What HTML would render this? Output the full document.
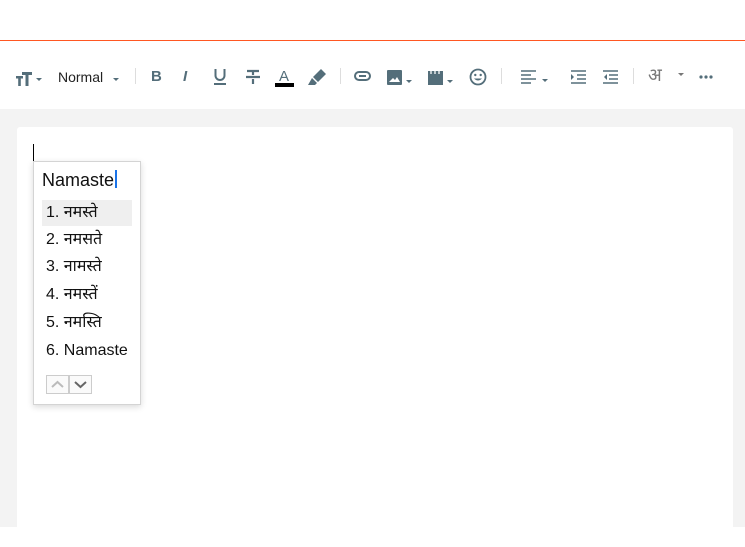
<!DOCTYPE html>
<html><head><meta charset="utf-8"><style>
*{margin:0;padding:0;box-sizing:border-box}
body{width:745px;height:527px;overflow:hidden;background:#fff;font-family:"Liberation Sans",Roboto,sans-serif;position:relative}
.line{position:absolute;left:0;top:40px;width:745px;height:1px;background:#ff5722}
.tb{position:absolute;left:0;top:41px;width:745px;height:68px;background:#fff}
.grey{position:absolute;left:0;top:109px;width:745px;height:418px;background:#f3f3f3}
.card{position:absolute;left:17px;top:127px;width:716px;height:420px;background:#fff;border-radius:3px}
.i{position:absolute;top:68px;height:18px;color:#546e7a;font-weight:bold;font-size:15px;line-height:18px}
.sep{position:absolute;top:68px;width:1px;height:16px;background:#ddd}
.caret{position:absolute;width:0;height:0;border-left:3px solid transparent;border-right:3px solid transparent;border-top:3px solid #546e7a}
.pop{position:absolute;left:33px;top:161px;width:108px;height:244px;background:#fff;border:1px solid #d4d4d4;box-shadow:0 2px 6px rgba(0,0,0,.15)}
.pop .w{position:absolute;left:8px;top:8px;font-size:18px;color:#111}
.pop .c{position:absolute;left:81px;top:8px;width:2px;height:18px;background:#1a73e8}
.it{position:absolute;left:8px;width:90px;height:26px;font-size:16px;line-height:26px;padding-left:4px;color:#111;font-family:"Liberation Sans","Noto Sans Devanagari","FreeSerif",sans-serif}
.sel{background:#efefef}
.nb{position:absolute;top:213px;width:23px;height:19px;border:1px solid #ccc;background:#fafafa}
</style></head><body>
<div class="line"></div>
<div class="tb"></div>
<div class="grey"></div>
<div class="card"></div>

<svg class="i" style="left:16px;top:70px" width="16" height="14" viewBox="0 0 16 14"><path d="M0 4h7v2.5H4.8V14H2.2V6.5H0zM6 0h10v3h-3.5v11h-3V3H6z" fill="#546e7a"/></svg>
<div class="caret" style="left:36px;top:78px"></div>
<div style="position:absolute;left:58px;top:69px;font-size:14px;color:#222">Normal</div>
<div class="caret" style="left:113px;top:78px"></div>
<div class="sep" style="left:135px"></div>
<div class="i" style="left:151px">B</div>
<div class="i" style="left:183px;font-style:italic;font-size:15px">I</div>
<svg style="position:absolute;left:213px;top:69px" width="14" height="16" viewBox="0 0 14 16"><path d="M2.5 0v6.5a4.5 4.5 0 009 0V0" fill="none" stroke="#546e7a" stroke-width="2"/><path d="M1 15h12" stroke="#546e7a" stroke-width="2"/></svg>
<svg style="position:absolute;left:246px;top:69px" width="14" height="16" viewBox="0 0 14 16"><path d="M1 2h12M0 8h14M7 2v4M7 10v5" stroke="#546e7a" stroke-width="2.2"/></svg>
<div class="i" style="left:279px;font-weight:normal">A</div>
<div style="position:absolute;left:275px;top:83px;width:19px;height:4px;background:#000"></div>
<svg style="position:absolute;left:308px;top:69px" width="18" height="16" viewBox="0 0 18 16"><path d="M13 0l5 5-8 8-5-5zM4 9l5 5-2 2H0z" fill="#546e7a"/></svg>
<div class="sep" style="left:340px"></div>
<svg style="position:absolute;left:354px;top:71px" width="17" height="10" viewBox="0 0 17 10"><rect x="1" y="1" width="15" height="8" rx="4" fill="none" stroke="#546e7a" stroke-width="2"/><path d="M5 5h7" stroke="#546e7a" stroke-width="2"/></svg>
<svg style="position:absolute;left:387px;top:70px" width="15" height="15" viewBox="0 0 15 15"><rect width="15" height="15" rx="1" fill="#546e7a"/><path d="M2 12l4-4 2 2 2-3 3 5z" fill="#fff"/></svg>
<div class="caret" style="left:406px;top:80px"></div>
<svg style="position:absolute;left:428px;top:70px" width="15" height="15" viewBox="0 0 15 15"><path d="M0 1h15v14H0z" fill="#546e7a"/><path d="M3 1v3M7 1v3M11 1v3" stroke="#fff" stroke-width="1.3"/></svg>
<div class="caret" style="left:447px;top:80px"></div>
<svg style="position:absolute;left:469px;top:68px" width="18" height="18" viewBox="0 0 18 18"><circle cx="9" cy="9" r="7.5" fill="none" stroke="#546e7a" stroke-width="1.8"/><circle cx="6.3" cy="7" r="1.2" fill="#546e7a"/><circle cx="11.7" cy="7" r="1.2" fill="#546e7a"/><path d="M5 10.5q4 4 8 0z" fill="#546e7a"/></svg>
<div class="sep" style="left:501px"></div>
<svg style="position:absolute;left:521px;top:70px" width="16" height="15" viewBox="0 0 16 15"><path d="M0 1h15M0 5h10M0 9h15M0 13h10" stroke="#546e7a" stroke-width="1.6"/></svg>
<div class="caret" style="left:542px;top:79px"></div>
<svg style="position:absolute;left:571px;top:70px" width="16" height="15" viewBox="0 0 16 15"><path d="M0 1h15M6 5h9M6 9h9M0 13h15" stroke="#546e7a" stroke-width="1.6"/><path d="M0 4l3 3-3 3z" fill="#546e7a"/></svg>
<svg style="position:absolute;left:603px;top:70px" width="16" height="15" viewBox="0 0 16 15"><path d="M0 1h15M6 5h9M6 9h9M0 13h15" stroke="#546e7a" stroke-width="1.6"/><path d="M4 4l-3 3 3 3z" fill="#546e7a"/></svg>
<div class="sep" style="left:633px"></div>
<div style="position:absolute;left:648px;top:66px;font-size:18px;color:#777;font-family:'Noto Sans Devanagari','FreeSerif',sans-serif">अ</div>
<div class="caret" style="left:678px;top:73px;border-top-color:#777"></div>
<svg style="position:absolute;left:699px;top:75px" width="14" height="4" viewBox="0 0 14 4"><circle cx="2" cy="2" r="1.6" fill="#546e7a"/><circle cx="7" cy="2" r="1.6" fill="#546e7a"/><circle cx="12" cy="2" r="1.6" fill="#546e7a"/></svg>

<div style="position:absolute;left:33px;top:144px;width:1px;height:17px;background:#000"></div>
<div class="pop">
 <div class="w">Namaste</div><div class="c"></div>
 <div class="it sel" style="top:38px">1. नमस्ते</div>
 <div class="it" style="top:65px">2. नमसते</div>
 <div class="it" style="top:92px">3. नामस्ते</div>
 <div class="it" style="top:120px">4. नमस्तें</div>
 <div class="it" style="top:148px">5. नमस्ति</div>
 <div class="it" style="top:176px">6. Namaste</div>
 <div class="nb" style="left:12px"><svg width="21" height="17" viewBox="0 0 21 17"><path d="M5 11l5.5-5 5.5 5" fill="none" stroke="#bbb" stroke-width="2"/></svg></div>
 <div class="nb" style="left:35px"><svg width="21" height="17" viewBox="0 0 21 17"><path d="M5 6l5.5 5 5.5-5" fill="none" stroke="#666" stroke-width="2"/></svg></div>
</div>
</body></html>
